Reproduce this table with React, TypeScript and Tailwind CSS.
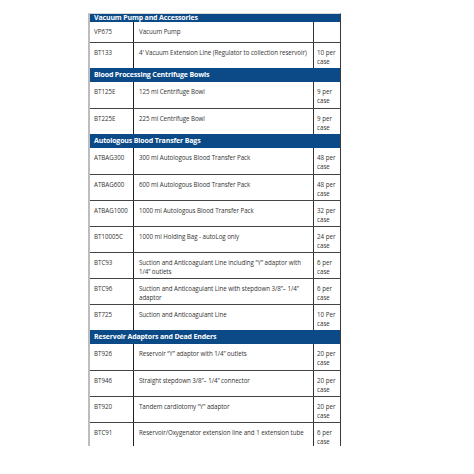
import { FC, ReactElement } from "react";

type Row = {
  code: string;
  desc: string;
  qty?: string[];
  short?: boolean;
};

type Section = {
  title: string;
  first?: boolean;
  rows: Row[];
};

const SECTIONS: Section[] = [
  {
    title: "Vacuum Pump and Accessories",
    first: true,
    rows: [
      { code: "VP675", desc: "Vacuum Pump", short: true },
      {
        code: "BT133",
        desc: "4' Vacuum Extension Line (Regulator to collection reservoir)",
        qty: ["10 per", "case"],
      },
    ],
  },
  {
    title: "Blood Processing Centrifuge Bowls",
    rows: [
      { code: "BT125E", desc: "125 ml Centrifuge Bowl", qty: ["9 per", "case"] },
      { code: "BT225E", desc: "225 ml Centrifuge Bowl", qty: ["9 per", "case"] },
    ],
  },
  {
    title: "Autologous Blood Transfer Bags",
    rows: [
      { code: "ATBAG300", desc: "300 ml Autologous Blood Transfer Pack", qty: ["48 per", "case"] },
      { code: "ATBAG600", desc: "600 ml Autologous Blood Transfer Pack", qty: ["48 per", "case"] },
      { code: "ATBAG1000", desc: "1000 ml Autologous Blood Transfer Pack", qty: ["32 per", "case"] },
      { code: "BT10005C", desc: "1000 ml Holding Bag - autoLog only", qty: ["24 per", "case"] },
      {
        code: "BTC93",
        desc: "Suction and Anticoagulant Line including \u201cY\u201d adaptor with 1/4\u201d outlets",
        qty: ["6 per", "case"],
      },
      {
        code: "BTC96",
        desc: "Suction and Anticoagulant Line with stepdown 3/8\u201d\u2013 1/4\u201d adaptor",
        qty: ["6 per", "case"],
      },
      { code: "BT725", desc: "Suction and Anticoagulant Line", qty: ["10 Per", "case"] },
    ],
  },
  {
    title: "Reservoir Adaptors and Dead Enders",
    rows: [
      { code: "BT926", desc: "Reservoir \u201cY\u201d adaptor with 1/4\u201d outlets", qty: ["20 per", "case"] },
      { code: "BT946", desc: "Straight stepdown 3/8\u201d\u2013 1/4\u201d connector", qty: ["20 per", "case"] },
      { code: "BT920", desc: "Tandem cardiotomy \u201cY\u201d adaptor", qty: ["20 per", "case"] },
      {
        code: "BTC91",
        desc: "Reservoir/Oxygenator extension line and 1 extension tube",
        qty: ["6 per", "case"],
      },
    ],
  },
];

const App: FC = (): ReactElement => {
  return (
    <div
      className="w-[474px] h-[474px] bg-white overflow-hidden"
      style={{ fontFamily: "'Open Sans', 'Noto Sans', sans-serif" }}
    >
      <div className="ml-[88px] mt-[13px] w-[253px] h-[433px] overflow-hidden border-l-2 border-[#bdbdbd] border-r border-r-[#3a3a3a] border-t border-t-[#d8d8d8]">
        {SECTIONS.map((section) => (
          <div key={section.title}>
            <div
              className={`flex items-center bg-[#0b4a87] px-[4px] text-white font-bold text-[7px] tracking-[-0.15px] ${
                section.first ? "h-[8px]" : "h-[14px]"
              }`}
            >
              {section.title}
            </div>
            {section.rows.map((row, i) => (
              <div
                key={row.code}
                className={`flex text-[#333] text-[6.2px] leading-[8.5px] ${
                  row.short ? "h-[20px]" : "h-[26px]"
                } ${i > 0 ? "border-t border-[#444]" : ""}`}
              >
                <div className="w-[43px] shrink-0 pl-[4px] pt-[6px]">{row.code}</div>
                <div className="w-[180px] shrink-0 border-l-[1.5px] border-[#1e1e1e] pl-[5px] pr-[2px] pt-[6px] tracking-[-0.05px]">
                  {row.desc}
                </div>
                <div className="flex-1 border-l border-[#333] pl-[3px] pt-[6px]">
                  {row.qty?.map((q) => (
                    <div key={q}>{q}</div>
                  ))}
                </div>
              </div>
            ))}
          </div>
        ))}
      </div>
    </div>
  );
};

export default App;
